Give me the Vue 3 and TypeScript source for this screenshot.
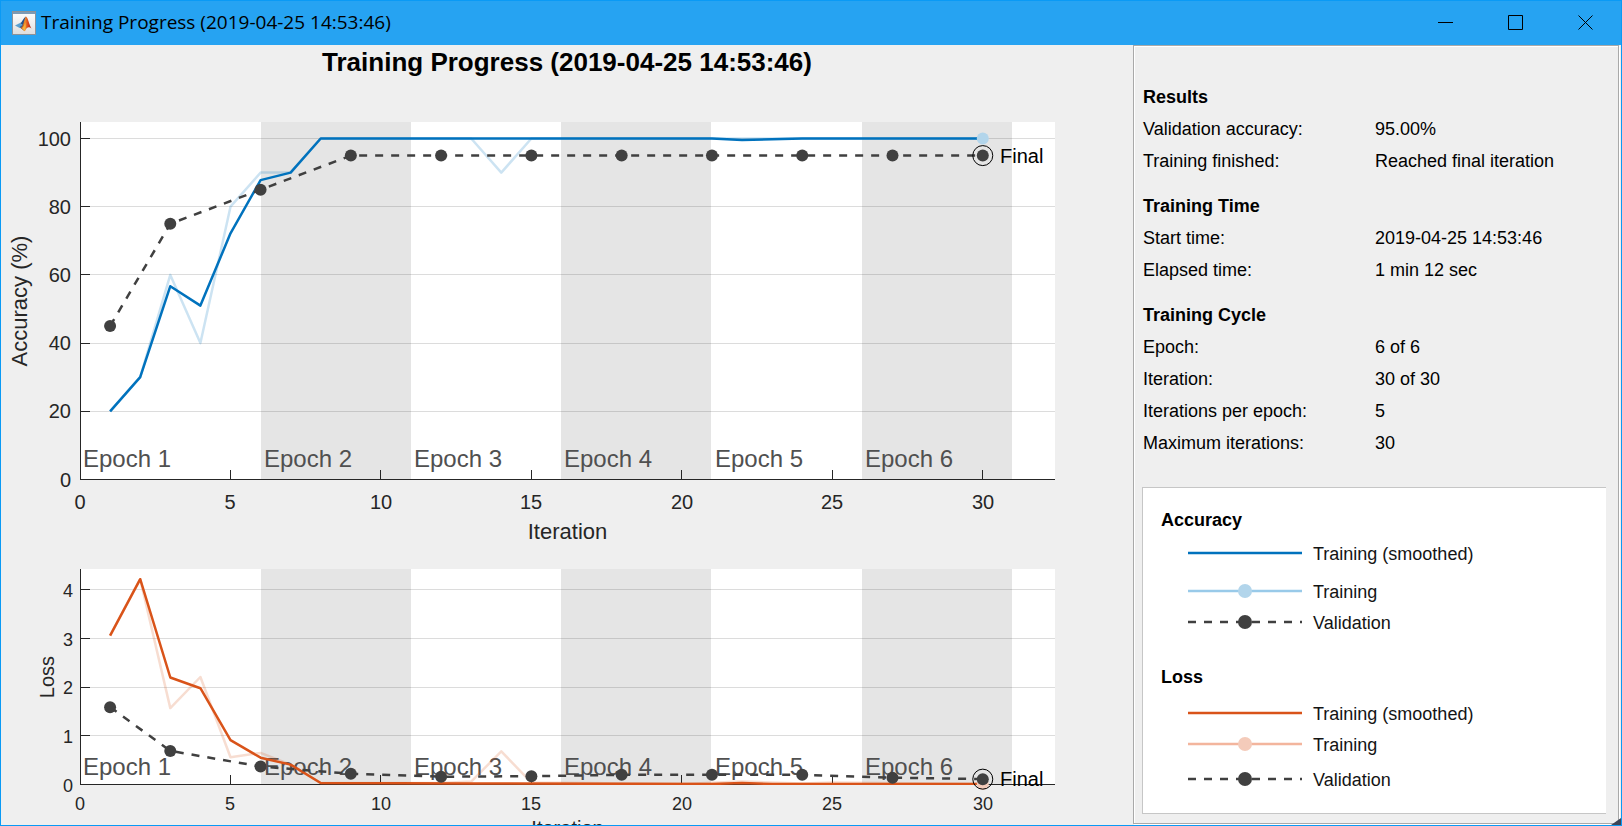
<script setup lang="ts">
import { computed, onBeforeUnmount, onMounted, ref } from 'vue'

type Point = [number, number]

interface Plot {
  id: string
  yLabel: string
  yMax: number
  yTicks: number[]
  color: string
  endColor: string
  smoothed: Point[]
  raw: Point[]
  validation: Point[]
  share: number
  top: number
  bottom: number
  tickSize: number
  labelSize: number
  yTickX: number
  yLabelX: number
  xTickDy: number
  xLabelDy: number
  epochDy: number
}

const title = 'Training Progress (2019-04-25 14:53:46)'

function series(values: number[]): Point[] {
  return values.map((v, i) => [i + 1, v] as Point)
}

const plots: Plot[] = [
  {
    id: 'accuracy',
    yLabel: 'Accuracy (%)',
    yMax: 105,
    yTicks: [0, 20, 40, 60, 80, 100],
    color: '#0072bd',
    endColor: '#b2d5eb',
    smoothed: [...series([20, 30, 56.7, 51, 72.2, 87.8, 90, 100]), [21, 100], [22, 99.6], [24, 100], [30, 100]],
    raw: [...series([20, 30, 60, 40, 80, 90, 90, 100]), [13, 100], [14, 90], [15, 100], [30, 100]],
    validation: [[1, 45], [3, 75], [6, 85], [9, 95], [12, 95], [15, 95], [18, 95], [21, 95], [24, 95], [27, 95], [30, 95]],
    share: 461,
    top: 34,
    bottom: 69,
    tickSize: 20,
    labelSize: 22,
    yTickX: 70,
    yLabelX: 26,
    xTickDy: 29,
    xLabelDy: 59,
    epochDy: 13
  },
  {
    id: 'loss',
    yLabel: 'Loss',
    yMax: 4.44,
    yTicks: [0, 1, 2, 3, 4],
    color: '#d95319',
    endColor: '#f4cbba',
    smoothed: [...series([3.06, 4.22, 2.2, 1.98, 0.91, 0.55, 0.41, 0.03]), [13, 0.02], [21, 0.01], [22, 0.03], [23, 0.01], [30, 0.01]],
    raw: [...series([3.06, 4.22, 1.57, 2.21, 0.56, 0.65, 0.41, 0.03]), [12, 0.03], [13, 0.06], [14, 0.68], [15, 0.04], [20, 0.01], [22, 0.06], [24, 0.02], [25, 0.04], [30, 0.01]],
    validation: [[1, 1.59], [3, 0.69], [6, 0.37], [9, 0.22], [12, 0.16], [15, 0.17], [18, 0.2], [21, 0.2], [24, 0.2], [27, 0.14], [30, 0.11]],
    share: 276,
    top: 20,
    bottom: 40,
    tickSize: 18,
    labelSize: 20,
    yTickX: 72,
    yLabelX: 53,
    xTickDy: 25,
    xLabelDy: 50,
    epochDy: 10
  }
]

const xMax = 32.4
const xTicks = [0, 5, 10, 15, 20, 25, 30]
const epochs = [1, 2, 3, 4, 5, 6]
const marginLeft = 79
const marginRight = 78

const host = ref<HTMLElement | null>(null)
const size = ref({ width: 1132, height: 737 })
let observer: ResizeObserver | undefined

function measure() {
  if (host.value) size.value = { width: host.value.clientWidth, height: host.value.clientHeight }
}

onMounted(() => {
  measure()
  observer = new ResizeObserver(measure)
  if (host.value) observer.observe(host.value)
})
onBeforeUnmount(() => observer?.disconnect())

const snap = (v: number) => Math.floor(v) + 0.5

const charts = computed(() => {
  const total = plots.reduce((sum, p) => sum + p.share, 0)
  return plots.map((p) => {
    const width = size.value.width
    const height = Math.round((size.value.height * p.share) / total)
    const right = width - marginRight
    const base = height - p.bottom
    const x = (v: number) => marginLeft + (v / xMax) * (right - marginLeft)
    const y = (v: number) => base - 0.5 - (v / p.yMax) * (base - p.top)
    const line = (pts: Point[]) => pts.map(([a, b]) => `${x(a).toFixed(1)},${y(b).toFixed(1)}`).join(' ')
    return {
      ...p,
      width,
      height,
      right,
      base,
      x,
      y,
      rawLine: line(p.raw),
      smoothedLine: line(p.smoothed),
      validationLine: line(p.validation),
      final: p.validation[p.validation.length - 1],
      last: p.raw[p.raw.length - 1]
    }
  })
})

const groups = [
  { name: 'Results', rows: [['Validation accuracy:', '95.00%'], ['Training finished:', 'Reached final iteration']] },
  { name: 'Training Time', rows: [['Start time:', '2019-04-25 14:53:46'], ['Elapsed time:', '1 min 12 sec']] },
  {
    name: 'Training Cycle',
    rows: [['Epoch:', '6 of 6'], ['Iteration:', '30 of 30'], ['Iterations per epoch:', '5'], ['Maximum iterations:', '30']]
  }
]

const legend = [
  {
    name: 'Accuracy',
    rows: [
      { text: 'Training (smoothed)', line: '#0072bd', dot: '', dashed: false, gap: 'near' },
      { text: 'Training', line: '#99cae9', dot: '#b2d5eb', dashed: false, gap: 'far' },
      { text: 'Validation', line: '#404040', dot: '#404040', dashed: true, gap: '' }
    ]
  },
  {
    name: 'Loss',
    rows: [
      { text: 'Training (smoothed)', line: '#d95319', dot: '', dashed: false, gap: 'far' },
      { text: 'Training', line: '#f3b59d', dot: '#f4cbba', dashed: false, gap: '' },
      { text: 'Validation', line: '#404040', dot: '#404040', dashed: true, gap: 'near' }
    ]
  }
]
</script>

<template>
  <div class="window">
    <header class="titlebar">
      <svg class="app-icon" width="24" height="24" viewBox="0 0 24 24" aria-hidden="true">
        <defs>
          <linearGradient id="tile" x1="0" y1="0" x2="0" y2="1">
            <stop offset="0" stop-color="#ffffff" />
            <stop offset="1" stop-color="#dedede" />
          </linearGradient>
          <linearGradient id="peak" x1="0" y1="0" x2="1" y2="0">
            <stop offset="0" stop-color="#7a1a10" />
            <stop offset="0.4" stop-color="#f0922c" />
            <stop offset="0.65" stop-color="#e04a1c" />
            <stop offset="1" stop-color="#a51d14" />
          </linearGradient>
        </defs>
        <rect x="0.5" y="0.5" width="23" height="23" fill="url(#tile)" stroke="#8c9299" />
        <path d="M1 1h22v2H1z" fill="#7d9bb5" />
        <path d="M3 14.600l5-2.500 2.800 2.200-3.100 2.700z" fill="#5aa0d0" />
        <path d="M8 12.100c2.300-.5 2.900-4.600 6-6.600l-1.600 7.500-3.900 4-.8-.9 3-2z" fill="#24508c" />
        <path d="M14 5.500c2 1 3.200 8.500 5.500 11.900-2.400-1.600-4.200-2-6.600 2.800-1.500 0-2.200-2.300-4.400-3.200 2.800-1.200 3.300-8.300 5.500-11.500z" fill="url(#peak)" />
        <path d="M9.500 17c2-.8 2.800-3 3.700-5.300.8 2.600.7 5.300-.5 8.200-1.100-.4-1.700-2.200-3.200-2.900z" fill="#f6b13c" />
      </svg>
      <span class="caption">{{ title }}</span>
      <div class="controls">
        <button type="button" aria-label="Minimize">
          <svg width="16" height="16" viewBox="0 0 16 16"><path d="M0 7.500h15" /></svg>
        </button>
        <button type="button" aria-label="Maximize">
          <svg width="16" height="16" viewBox="0 0 16 16"><path d="M.5.5h14v14H.5z" /></svg>
        </button>
        <button type="button" aria-label="Close">
          <svg width="16" height="16" viewBox="0 0 16 16"><path d="M.5.5l14 14M14.500.5l-14 14" /></svg>
        </button>
      </div>
    </header>

    <div class="body">
      <main class="figure">
        <h1>{{ title }}</h1>
        <div ref="host" class="charts">
          <svg
            v-for="c in charts"
            :key="c.id"
            class="chart"
            role="img"
            :aria-label="c.yLabel"
            :width="c.width"
            :height="c.height"
          >
            <clipPath :id="`clip-${c.id}`">
              <rect :x="marginLeft" :y="c.top" :width="c.right - marginLeft" :height="c.base - c.top" />
            </clipPath>
            <rect class="plot-bg" :x="marginLeft" :y="c.top" :width="c.right - marginLeft" :height="c.base - c.top" />
            <template v-for="e in epochs" :key="e">
              <rect
                v-if="e % 2 === 0"
                class="band"
                :x="Math.round(c.x(e * 5 - 4))"
                :y="c.top"
                :width="Math.round(c.x(e * 5 + 1) - c.x(e * 5 - 4))"
                :height="c.base - c.top"
              />
            </template>
            <template v-for="t in c.yTicks" :key="t">
              <line v-if="t" class="grid" :x1="marginLeft" :x2="c.right" :y1="snap(c.y(t))" :y2="snap(c.y(t))" />
              <line class="axis" :x1="marginLeft" :x2="marginLeft + 10" :y1="snap(c.y(t))" :y2="snap(c.y(t))" />
              <text class="tick" text-anchor="end" :font-size="c.tickSize" :x="c.yTickX" :y="Math.round(c.y(t)) + 7">{{ t }}</text>
            </template>
            <template v-for="t in xTicks" :key="t">
              <line class="axis" :x1="snap(c.x(t))" :x2="snap(c.x(t))" :y1="c.base" :y2="c.base - 10" />
              <text class="tick" text-anchor="middle" :font-size="c.tickSize" :x="Math.round(c.x(t))" :y="c.base + c.xTickDy">{{ t }}</text>
            </template>
            <path class="axis" :d="`M${marginLeft + 0.5} ${c.top}V${c.base - 0.5}H${c.right}`" />
            <text
              v-for="e in epochs"
              :key="e"
              class="epoch"
              :x="Math.round(c.x(e === 1 ? 0 : e * 5 - 4)) + 3"
              :y="c.base - c.epochDy"
            >Epoch {{ e }}</text>
            <g :clip-path="`url(#clip-${c.id})`">
              <polyline class="raw" :stroke="c.color" :points="c.rawLine" />
              <polyline class="series" :stroke="c.color" :points="c.smoothedLine" />
            </g>
            <circle :cx="c.x(c.last[0])" :cy="c.y(c.last[1])" r="6" :fill="c.endColor" />
            <polyline class="validation" :points="c.validationLine" />
            <circle v-for="p in c.validation" :key="p[0]" class="dot" :cx="c.x(p[0])" :cy="c.y(p[1])" r="6" />
            <circle class="ring" :cx="c.x(c.final[0])" :cy="c.y(c.final[1])" r="10" />
            <text class="final" :x="Math.round(c.x(c.final[0])) + 17" :y="Math.round(c.y(c.final[1])) + 7">Final</text>
            <text
              class="label"
              text-anchor="middle"
              :font-size="c.labelSize"
              :x="(marginLeft + c.right) / 2"
              :y="c.base + c.xLabelDy"
            >Iteration</text>
            <text
              class="label"
              text-anchor="middle"
              :font-size="c.labelSize"
              :transform="`translate(${c.yLabelX} ${(c.top + c.base) / 2}) rotate(-90)`"
            >{{ c.yLabel }}</text>
          </svg>
        </div>
      </main>

      <aside class="panel">
        <section v-for="g in groups" :key="g.name" class="group">
          <h2>{{ g.name }}</h2>
          <dl>
            <template v-for="r in g.rows" :key="r[0]">
              <dt>{{ r[0] }}</dt>
              <dd>{{ r[1] }}</dd>
            </template>
          </dl>
        </section>

        <div class="legend">
          <section v-for="s in legend" :key="s.name" class="legend-group">
            <h2>{{ s.name }}</h2>
            <ul>
              <li v-for="(r, i) in s.rows" :key="i" :class="r.gap">
                <svg width="114" height="16" viewBox="0 0 114 16" aria-hidden="true">
                  <line x1="0" x2="114" y1="8" y2="8" :stroke="r.line" stroke-width="2.500" :stroke-dasharray="r.dashed ? '8 8' : undefined" />
                  <circle v-if="r.dot" cx="57" cy="8" r="7" :fill="r.dot" />
                </svg>
                <span>{{ r.text }}</span>
              </li>
            </ul>
          </section>
        </div>
      </aside>
    </div>
    <span class="grip" aria-hidden="true"></span>
  </div>
</template>

<style>
body {
  margin: 0;
}
</style>

<style scoped>
.window {
  position: relative;
  display: flex;
  flex-direction: column;
  box-sizing: border-box;
  height: 100vh;
  overflow: hidden;
  border: 1px solid #0a9af5;
  background: #efefef;
  color: #000;
  font-family: "Liberation Sans", Arial, sans-serif;
}

.titlebar {
  display: flex;
  flex: none;
  align-items: center;
  height: 44px;
  padding-left: 11px;
  background: #26a3f2;
}

.caption {
  margin-left: 5px;
  padding-bottom: 2px;
  font-family: "Open Sans", "Noto Sans", sans-serif;
  font-size: 19px;
  line-height: 24px;
}

.controls {
  display: flex;
  align-self: stretch;
  margin-left: auto;
}

.controls button {
  display: flex;
  align-items: center;
  justify-content: center;
  width: 70px;
  padding: 0;
  border: 0;
  background: none;
}

.controls path {
  fill: none;
  stroke: #000;
  stroke-width: 1;
}

.body {
  display: grid;
  flex: 1;
  grid-template-columns: minmax(0, 1fr) 488px;
  min-height: 0;
}

.figure {
  display: flex;
  flex-direction: column;
  min-width: 0;
  min-height: 0;
}

h1 {
  margin: 0;
  padding: 2px 0 11px;
  font-size: 26px;
  line-height: 30px;
  text-align: center;
}

.charts {
  flex: 1;
  min-height: 0;
  overflow: hidden;
}

.chart {
  display: block;
}

.plot-bg {
  fill: #fff;
}

.band {
  fill: #e5e5e5;
}

.grid {
  stroke: #262626;
  stroke-opacity: 0.16;
}

.axis {
  fill: none;
  stroke: #262626;
}

.tick,
.label {
  fill: #262626;
}

.epoch {
  fill: #505050;
  font-size: 24px;
}

.raw,
.series,
.validation {
  fill: none;
  stroke-width: 2.5px;
  stroke-linejoin: round;
}

.raw {
  stroke-opacity: 0.2;
}

.validation {
  stroke: #404040;
  stroke-dasharray: 8 8;
}

.dot {
  fill: #404040;
}

.ring {
  fill: none;
  stroke: #000;
}

.final {
  font-size: 20px;
}

.panel {
  display: flex;
  flex-direction: column;
  margin: 0 2px 1px 0;
  padding: 35px 12px 9px 8px;
  border: 1px solid #a9a9a9;
  box-shadow: inset 1px 1px #fff, 1px 1px #fff;
  font-size: 18px;
}

h2 {
  margin: 0;
  font-size: 18px;
  line-height: 32px;
}

.group {
  padding-left: 1px;
}

.group + .group {
  margin-top: 13px;
}

dl {
  display: grid;
  grid-template-columns: 232px 1fr;
  margin: 0;
  line-height: 32px;
}

dd {
  margin: 0;
}

.legend {
  flex: 1;
  margin-top: 28px;
  padding: 17px 18px 0;
  border: 1px solid #c6c6c6;
  border-right: 0;
  background: #fff;
}

.legend-group + .legend-group {
  margin-top: 23px;
}

.legend h2 {
  line-height: 30px;
}

ul {
  margin: 0;
  padding: 0 0 0 27px;
  list-style: none;
}

li {
  display: flex;
  align-items: center;
  gap: 11px;
  color: #141414;
  line-height: 31px;
}

li svg {
  margin-bottom: 4px;
}

.near {
  margin-top: 4px;
}

.far {
  margin-top: 7px;
}

.grip {
  position: absolute;
  right: 0;
  bottom: 0;
  width: 10px;
  height: 7px;
  background: #3c4557;
  clip-path: polygon(100% 0, 100% 100%, 0 100%);
}
</style>
